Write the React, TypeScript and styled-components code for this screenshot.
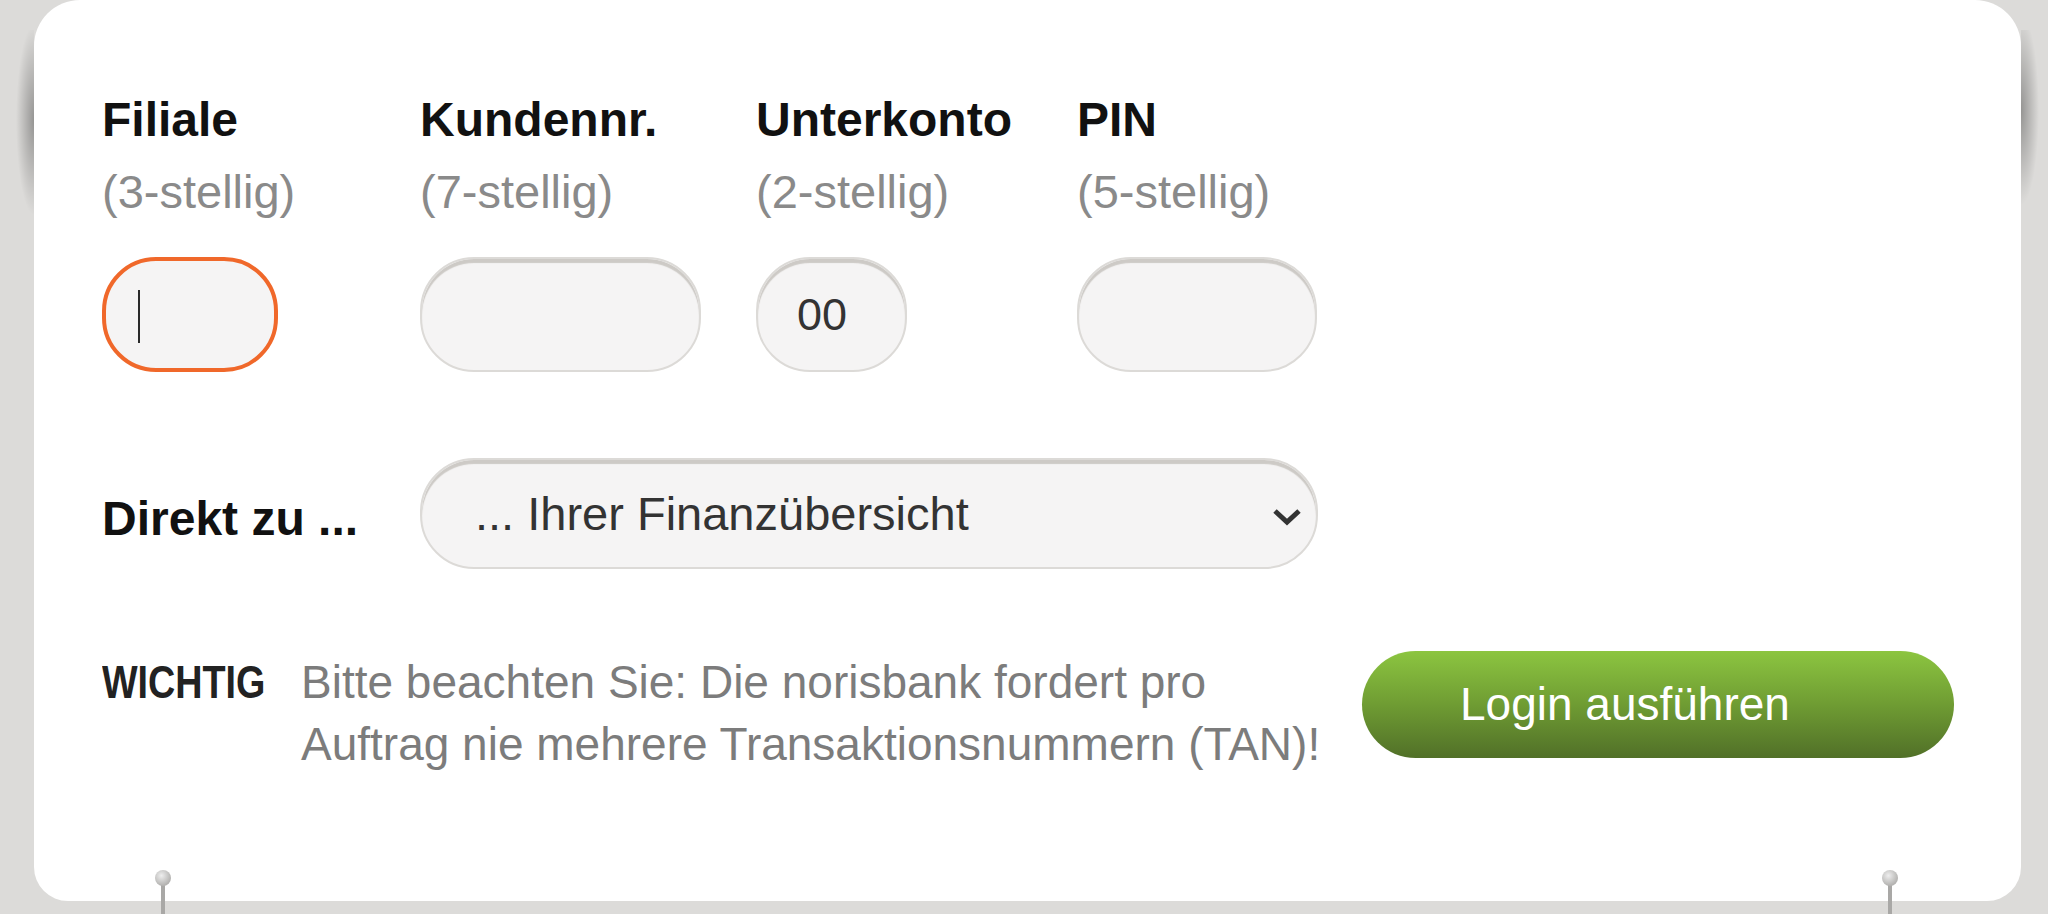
import React from "react";
import styled, { createGlobalStyle } from "styled-components";

const GlobalStyle = createGlobalStyle`
  html, body {
    margin: 0;
    padding: 0;
    background: #dcdbd9;
    overflow: hidden;
  }
  body {
    font-family: "Liberation Sans", Arial, sans-serif;
  }
`;

const Page = styled.div`
  position: relative;
  width: 2048px;
  height: 914px;
  padding-left: 34px;
  box-sizing: border-box;
`;

const Card = styled.form`
  position: relative;
  width: 1987px;
  height: 901px;
  box-sizing: border-box;
  padding: 92px 0 0 68px;
  background: #fff;
  border-radius: 46px 46px 34px 34px;

  /* curled-paper shadow on both sides near the top */
  &::before,
  &::after {
    content: "";
    position: absolute;
    top: 30px;
    width: 18px;
    height: 200px;
    pointer-events: none;
  }
  &::before {
    left: -18px;
    background: radial-gradient(18px 95px at 100% 45%, rgba(0, 0, 0, 0.32), rgba(0, 0, 0, 0));
  }
  &::after {
    right: -18px;
    background: radial-gradient(18px 95px at 0% 40%, rgba(0, 0, 0, 0.32), rgba(0, 0, 0, 0));
  }
`;

const FieldGrid = styled.div`
  display: grid;
  grid-template-columns: 318px 336px 321px auto;
`;

const FieldColumn = styled.div`
  display: flex;
  flex-direction: column;
  align-items: flex-start;
`;

const Label = styled.label`
  font-size: 48px;
  line-height: 56px;
  font-weight: 700;
  color: #111;
  white-space: nowrap;
`;

const Hint = styled.span`
  margin-top: 16px;
  font-size: 47px;
  line-height: 56px;
  color: #8a8a8a;
  white-space: nowrap;
`;

const FieldWrap = styled.div`
  position: relative;
  margin-top: 37px;
`;

const Field = styled.input<{ $w: number; $focused?: boolean }>`
  display: block;
  width: ${(p) => p.$w}px;
  height: 115px;
  box-sizing: border-box;
  padding: 0 0 0 39px;
  border-radius: 54px;
  background: #f5f4f4;
  border: ${(p) => (p.$focused ? "4px solid #f0682a" : "2px solid #dcdad7")};
  box-shadow: ${(p) => (p.$focused ? "none" : "inset 0 4px 1px #cdcac6")};
  font-family: "Liberation Sans", Arial, sans-serif;
  font-size: 45px;
  color: #333;
  outline: none;
  caret-color: transparent;
`;

const Caret = styled.span`
  position: absolute;
  left: 36px;
  top: 33px;
  width: 2px;
  height: 53px;
  background: #2a2a2a;
`;

const SelectRow = styled.div`
  display: flex;
  align-items: center;
  margin-top: 86px;
`;

const SelectLabel = styled(Label)`
  width: 318px;
  margin-top: 10px;
`;

const SelectWrap = styled.div`
  position: relative;
  width: 898px;
  height: 111px;
`;

const Select = styled.select`
  width: 100%;
  height: 100%;
  box-sizing: border-box;
  padding: 0 0 0 53px;
  appearance: none;
  -webkit-appearance: none;
  border-radius: 54px;
  background: #f5f4f4;
  border: 2px solid #dcdad7;
  box-shadow: inset 0 4px 1px #cdcac6;
  font-family: "Liberation Sans", Arial, sans-serif;
  font-size: 47px;
  color: #333;
  outline: none;
`;

const Chevron = styled.svg`
  position: absolute;
  right: 16px;
  top: 49px;
  width: 30px;
  height: 20px;
  pointer-events: none;
`;

const NoteRow = styled.div`
  display: flex;
  align-items: flex-start;
  margin-top: 82px;
`;

const ImportantCell = styled.div`
  width: 199px;
  flex: none;
`;

const Important = styled.span`
  display: inline-block;
  font-size: 46px;
  line-height: 62px;
  font-weight: 700;
  color: #222;
  transform: scaleX(0.82);
  transform-origin: left center;
`;

const Note = styled.p`
  width: 1061px;
  flex: none;
  margin: 0;
  font-size: 46px;
  line-height: 62px;
  color: #7c7c7c;
`;

const LoginButton = styled.button`
  width: 592px;
  height: 107px;
  flex: none;
  padding: 0 0 0 98px;
  border: none;
  border-radius: 54px;
  background: linear-gradient(to bottom, #8cc540, #6f9c33 50%, #517028);
  color: #fff;
  text-align: left;
  font-family: "Liberation Sans", Arial, sans-serif;
  font-size: 46px;
  line-height: 107px;
  cursor: pointer;
`;

const Pin = styled.span<{ $left: number }>`
  position: absolute;
  left: ${(p) => p.$left}px;
  top: 870px;
  width: 16px;
  height: 44px;

  &::before {
    content: "";
    position: absolute;
    left: 6px;
    top: 10px;
    width: 4px;
    height: 34px;
    background: #a9a8a6;
  }
  &::after {
    content: "";
    position: absolute;
    left: 0;
    top: 0;
    width: 16px;
    height: 16px;
    border-radius: 50%;
    background: radial-gradient(circle at 40% 35%, #eeeeee, #b4b3b1 70%);
  }
`;

const fields = [
  { label: "Filiale", hint: "(3-stellig)", width: 176, focused: true, value: "" },
  { label: "Kundennr.", hint: "(7-stellig)", width: 281, value: "" },
  { label: "Unterkonto", hint: "(2-stellig)", width: 151, value: "00" },
  { label: "PIN", hint: "(5-stellig)", width: 240, value: "" },
];

export default function App() {
  return (
    <Page>
      <GlobalStyle />
      <Card onSubmit={(e) => e.preventDefault()}>
        <FieldGrid>
          {fields.map((f) => (
            <FieldColumn key={f.label}>
              <Label>{f.label}</Label>
              <Hint>{f.hint}</Hint>
              <FieldWrap>
                <Field
                  $w={f.width}
                  $focused={f.focused}
                  defaultValue={f.value}
                  type={f.label === "PIN" ? "password" : "text"}
                />
                {f.focused && <Caret />}
              </FieldWrap>
            </FieldColumn>
          ))}
        </FieldGrid>

        <SelectRow>
          <SelectLabel>Direkt zu ...</SelectLabel>
          <SelectWrap>
            <Select defaultValue="finanz">
              <option value="finanz">... Ihrer Finanzübersicht</option>
              <option value="umsatz">... Ihren Umsätzen</option>
              <option value="ueberweisung">... einer Überweisung</option>
            </Select>
            <Chevron viewBox="0 0 30 20">
              <path d="M3 4 L15 15 L27 4" fill="none" stroke="#333" strokeWidth="5" />
            </Chevron>
          </SelectWrap>
        </SelectRow>

        <NoteRow>
          <ImportantCell>
            <Important>WICHTIG</Important>
          </ImportantCell>
          <Note>
            Bitte beachten Sie: Die norisbank fordert pro Auftrag nie mehrere
            Transaktionsnummern (TAN)!
          </Note>
          <LoginButton type="submit">Login ausführen</LoginButton>
        </NoteRow>
      </Card>
      <Pin $left={155} />
      <Pin $left={1882} />
    </Page>
  );
}
